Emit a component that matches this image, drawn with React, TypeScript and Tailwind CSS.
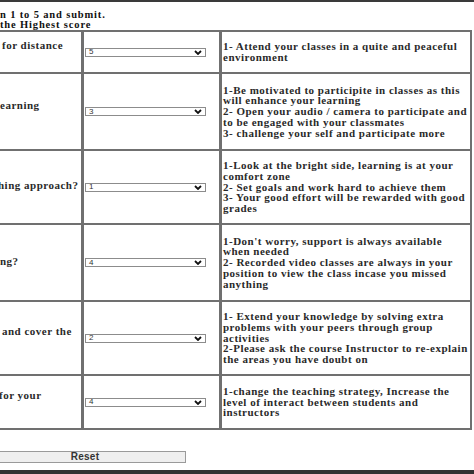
import React from "react";

const rows = [
  {
    q: "for distance",
    qClass: "pt-[8px] pl-[2px]",
    value: "5",
    tips: ["1- Attend your classes in a quite and peaceful", "environment"],
  },
  {
    q: "earning",
    qClass: "pt-[26px]",
    value: "3",
    tips: [
      "1-Be motivated to participite in classes as this",
      "will enhance your learning",
      "2- Open your audio / camera to participate and",
      "to be engaged with your classmates",
      "3- challenge your self and participate more",
    ],
  },
  {
    q: "hing approach?",
    qClass: "pt-[29px] -ml-[2px]",
    value: "1",
    tips: [
      "1-Look at the bright side, learning is at your",
      "comfort zone",
      "2- Set goals and work hard to achieve them",
      "3- Your good effort will be rewarded with good",
      "grades",
    ],
  },
  {
    q: "ng?",
    qClass: "pt-[31px]",
    value: "4",
    tips: [
      "1-Don't worry, support is always available",
      "when needed",
      "2- Recorded video classes are always in your",
      "position to view the class incase you missed",
      "anything",
    ],
  },
  {
    q: "and cover the",
    qClass: "pt-[24px] pl-[2px]",
    value: "2",
    tips: [
      "1- Extend your knowledge by solving extra",
      "problems with your peers through group",
      "activities",
      "2-Please ask the course Instructor to re-explain",
      "the areas you have doubt on",
    ],
  },
  {
    q: "for your",
    qClass: "pt-[14px] -ml-[1px]",
    value: "4",
    tips: [
      "1-change the teaching strategy, Increase the",
      "level of interact between students and",
      "instructors",
    ],
  },
];

const FakeSelect = ({ value }: { value: string }) => (
  <div className="w-[121px] h-[9px] border border-[#8c8c8c] bg-white flex items-center justify-between pl-[3px] pr-[3px] font-['Liberation_Sans',sans-serif] text-[8px] leading-none text-[#333]">
    <span>{value}</span>
    <svg width="8" height="5" viewBox="0 0 8 5">
      <path d="M1 1 L4 4 L7 1" fill="none" stroke="#111" strokeWidth="1.8" />
    </svg>
  </div>
);

export default function App() {
  return (
    <div className="w-[474px] h-[474px] overflow-hidden bg-white flex flex-col font-['Liberation_Serif',serif] text-[#2a2a2a]">
      <div className="h-[2px] bg-[#3a3a3a]" />
      <div className="h-[28px] pt-[8px] text-[10.5px] leading-[9.5px] font-bold tracking-[0.85px] whitespace-nowrap text-[#111]">
        <div>n 1 to 5 and submit.</div>
        <div>the Highest score</div>
      </div>
      <div className="w-[472px] grid grid-cols-[81px_135px_248px] grid-rows-[40px_75px_72px_75px_72px_52px] gap-x-[3px] gap-y-[2px] bg-[#707070] py-[2px] pr-[2px]">
        {rows.map((r, i) => (
          <React.Fragment key={i}>
            <div className="bg-white overflow-hidden">
              <div className={`text-[11px] leading-[11px] font-bold tracking-[0.5px] whitespace-nowrap ${r.qClass}`}>
                {r.q}
              </div>
            </div>
            <div className="bg-white flex items-center pl-[1px]">
              <FakeSelect value={r.value} />
            </div>
            <div className="bg-white flex items-center pl-[1px] overflow-hidden">
              <div className="text-[11px] leading-[10.7px] font-bold tracking-[0.5px] whitespace-nowrap">
                {r.tips.map((t, j) => (
                  <div key={j}>{t}</div>
                ))}
              </div>
            </div>
          </React.Fragment>
        ))}
      </div>
      <div className="h-[21px]" />
      <button className="-ml-[16px] w-[202px] h-[12px] bg-[#efefef] border border-[#9a9a9a] flex items-center justify-center font-['Liberation_Sans',sans-serif] text-[10px] font-bold tracking-[0.3px] text-[#333] leading-none">
        Reset
      </button>
      <div className="h-[7px]" />
      <div className="flex-1 bg-[#333]" />
    </div>
  );
}
